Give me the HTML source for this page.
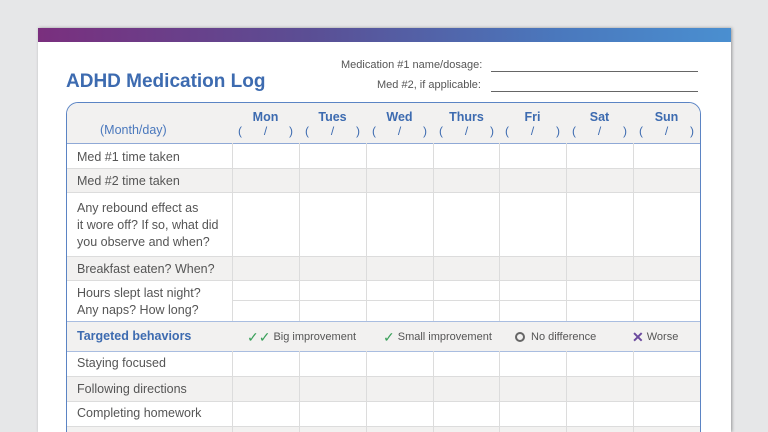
<!DOCTYPE html><html style="width:768px;height:432px;overflow:hidden"><head><style>
*{margin:0;padding:0;box-sizing:border-box}
body{width:768px;height:432px;background:#e6e7e8;position:relative;overflow:hidden;font-family:"Liberation Sans",sans-serif}
.page{position:absolute;left:38px;top:28px;width:693px;height:404px;background:#fff;box-shadow:1px 0 3px rgba(0,0,0,.35)}
.bar{position:absolute;left:38px;top:28px;width:693px;height:14px;background:linear-gradient(90deg,#7a2f7e,#5a4f95 40%,#4a78bd 75%,#4a8fd0)}
.t{position:absolute;white-space:nowrap}
.title{left:66px;top:71px;font-size:19px;font-weight:bold;color:#3d6bb0}
.lab{font-size:11px;color:#555}
.line{position:absolute;height:1px;background:#666;left:491px;width:207px}
.tbl{position:absolute;left:66px;top:102px;width:635px;height:330px;border:1.5px solid #5b84c4;border-bottom:none;border-radius:12px 12px 0 0;overflow:hidden;background:#fff}
.row{position:absolute;left:0;width:100%}
.g{background:#f2f1f0}
.v{position:absolute;width:1px;background:#dcdcdc}
.h{position:absolute;height:1px;background:#dcdcdc}
.rl{position:absolute;left:10px;font-size:12.5px;color:#555;line-height:17px}
.day{position:absolute;font-size:12.5px;font-weight:bold;color:#3d6bb0;text-align:center;width:67px}
.dt{position:absolute;font-size:12px;color:#3d6bb0;width:67px;top:21px;display:flex;justify-content:space-between;padding:0 6px}
.lg{position:absolute;top:226px;height:16px;display:flex;align-items:center;gap:3px;font-size:11px;color:#555;white-space:nowrap}
.lg b{display:inline-block;line-height:16px}
</style></head><body>
<div class="page"></div><div class="bar"></div>
<div class="t title">ADHD Medication Log</div>
<div class="t lab" style="left:341px;top:59px">Medication #1 name/dosage:</div>
<div class="t lab" style="left:377px;top:79px">Med #2, if applicable:</div>
<div class="line" style="top:71px"></div><div class="line" style="top:91px"></div>
<div class="tbl">
<div class="row g" style="top:0;height:40px"></div>
<div class="h" style="top:40px;left:0;width:100%;background:#8fa9d6"></div>
<div class="row g" style="top:65px;height:24px"></div>
<div class="row g" style="top:153px;height:24px"></div>
<div class="row g" style="top:218px;height:30px"></div>
<div class="h" style="top:218px;left:0;width:100%;background:#a9bde0"></div>
<div class="h" style="top:248px;left:0;width:100%;background:#a9bde0"></div>
<div class="row g" style="top:273px;height:25px"></div>
<div class="row g" style="top:323px;height:10px"></div>
<div class="h" style="top:65px;left:0;width:100%"></div>
<div class="h" style="top:89px;left:0;width:100%"></div>
<div class="h" style="top:153px;left:0;width:100%"></div>
<div class="h" style="top:177px;left:0;width:100%"></div>
<div class="h" style="top:197px;left:166px;width:470px"></div>
<div class="h" style="top:273px;left:0;width:100%"></div>
<div class="h" style="top:298px;left:0;width:100%"></div>
<div class="h" style="top:323px;left:0;width:100%"></div>
<div class="v" style="left:165px;top:40px;height:178px"></div><div class="v" style="left:165px;top:248px;height:90px"></div>
<div class="v" style="left:232px;top:40px;height:178px"></div><div class="v" style="left:232px;top:248px;height:90px"></div>
<div class="v" style="left:299px;top:40px;height:178px"></div><div class="v" style="left:299px;top:248px;height:90px"></div>
<div class="v" style="left:366px;top:40px;height:178px"></div><div class="v" style="left:366px;top:248px;height:90px"></div>
<div class="v" style="left:432px;top:40px;height:178px"></div><div class="v" style="left:432px;top:248px;height:90px"></div>
<div class="v" style="left:499px;top:40px;height:178px"></div><div class="v" style="left:499px;top:248px;height:90px"></div>
<div class="v" style="left:566px;top:40px;height:178px"></div><div class="v" style="left:566px;top:248px;height:90px"></div>
<div class="t" style="left:33px;top:20px;font-size:12.5px;color:#4a78bd">(Month/day)</div>
<div class="day" style="left:165px;top:7px">Mon</div><div class="dt" style="left:165px"><span>(</span><span>/</span><span>)</span></div>
<div class="day" style="left:232px;top:7px">Tues</div><div class="dt" style="left:232px"><span>(</span><span>/</span><span>)</span></div>
<div class="day" style="left:299px;top:7px">Wed</div><div class="dt" style="left:299px"><span>(</span><span>/</span><span>)</span></div>
<div class="day" style="left:366px;top:7px">Thurs</div><div class="dt" style="left:366px"><span>(</span><span>/</span><span>)</span></div>
<div class="day" style="left:432px;top:7px">Fri</div><div class="dt" style="left:432px"><span>(</span><span>/</span><span>)</span></div>
<div class="day" style="left:499px;top:7px">Sat</div><div class="dt" style="left:499px"><span>(</span><span>/</span><span>)</span></div>
<div class="day" style="left:566px;top:7px">Sun</div><div class="dt" style="left:566px"><span>(</span><span>/</span><span>)</span></div>
<div class="rl" style="top:46px">Med #1 time taken</div>
<div class="rl" style="top:70px">Med #2 time taken</div>
<div class="rl" style="top:97px">Any rebound effect as<br>it wore off? If so, what did<br>you observe and when?</div>
<div class="rl" style="top:158px">Breakfast eaten? When?</div>
<div class="rl" style="top:182px">Hours slept last night?<br>Any naps? How long?</div>
<div class="rl" style="top:225px;color:#3d6bb0;font-weight:bold">Targeted behaviors</div>
<div class="lg" style="left:180px"><b style="color:#3aa05a;font-size:14px;font-weight:normal">✓✓</b><span>Big improvement</span></div>
<div class="lg" style="left:316px"><b style="color:#3aa05a;font-size:14px;font-weight:normal">✓</b><span>Small improvement</span></div>
<div class="lg" style="left:448px"><b style="width:10px;height:10px;border:2.5px solid #666;border-radius:50%;margin-right:3px"></b><span>No difference</span></div>
<div class="lg" style="left:565px"><b style="color:#6b4a9e;font-size:14px">✕</b><span>Worse</span></div>
<div class="rl" style="top:252px">Staying focused</div>
<div class="rl" style="top:278px">Following directions</div>
<div class="rl" style="top:302px">Completing homework</div>
</div>
</body></html>
